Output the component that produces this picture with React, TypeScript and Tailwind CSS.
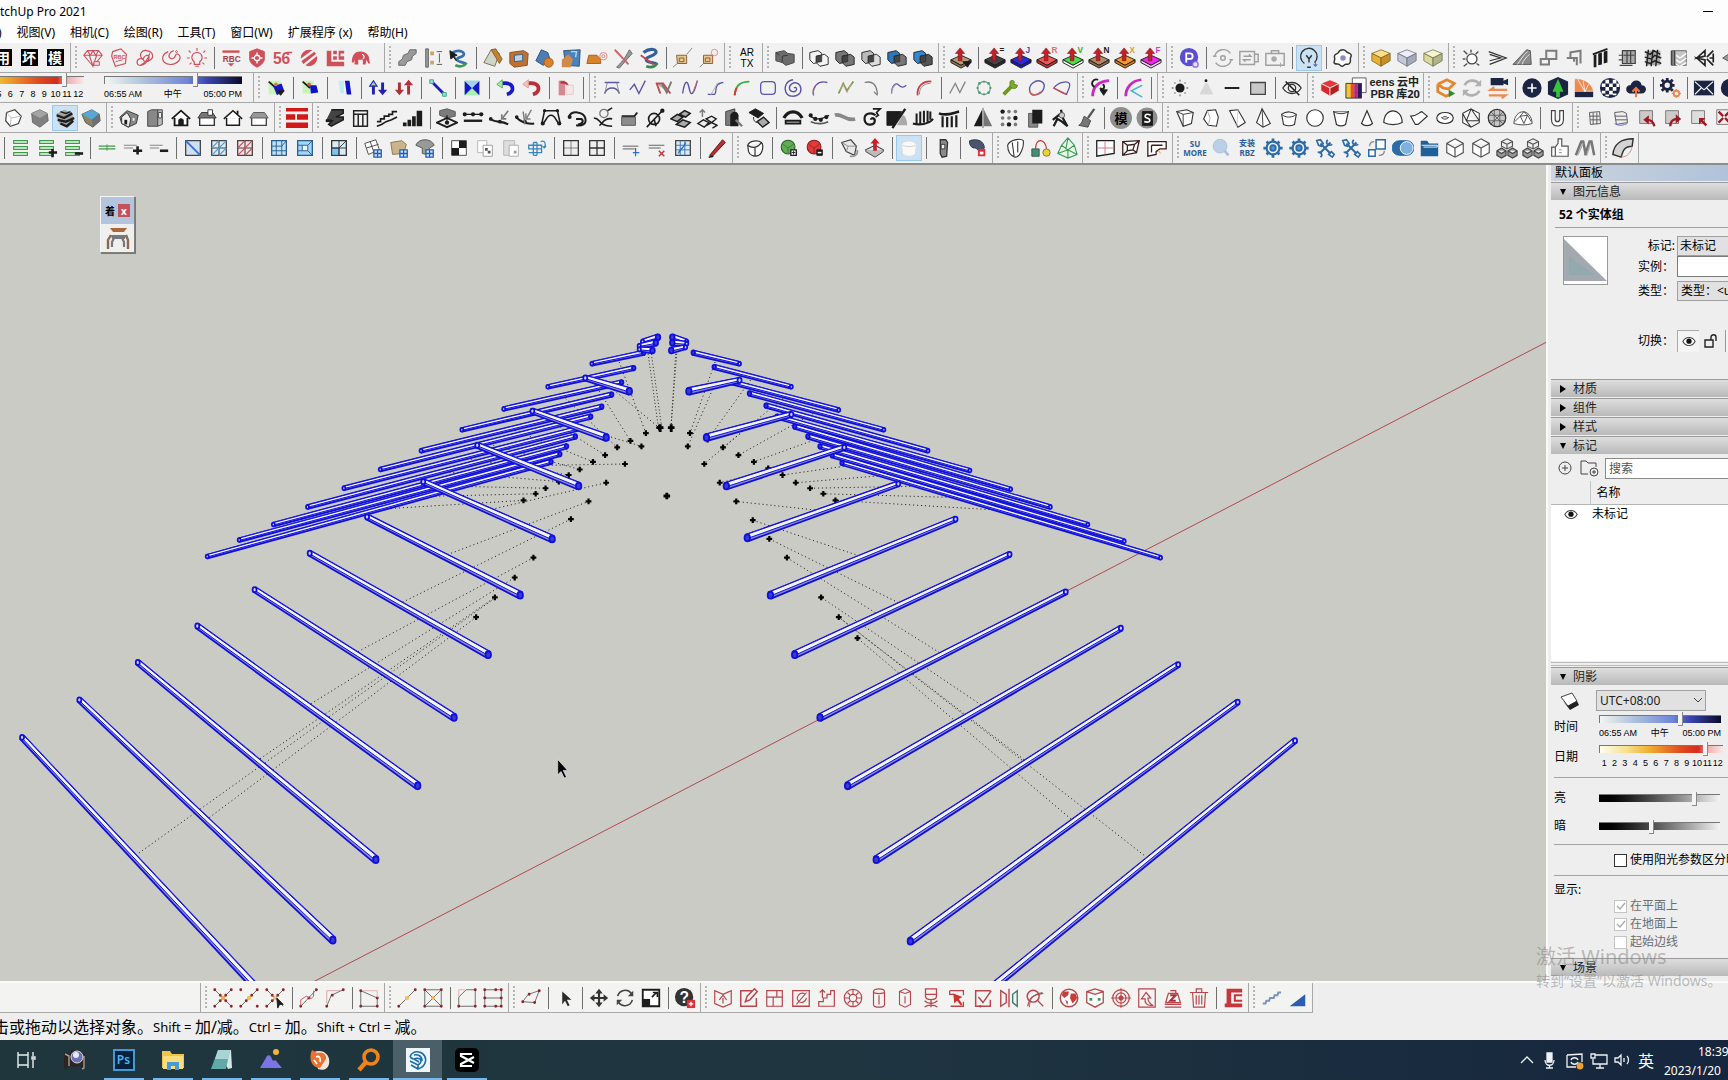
import { useState } from 'react';

// ---------- drawing helpers for the 24x24 tool icons ----------

type Shape = [d: string, stroke: string, fill?: string, width?: number];
type Letter = { text: string; x: number; y: number; fill: string; size: number };
type Part = Shape | Letter;

const K = '#1c1c1c';
const G = '#7c7c7c';
const LG = '#b5b5b5';
const R = '#d0505a';
const B = '#2d6aa8';
const V = '#5a54a8';
const O = '#d9822b';
const RED = '#b8464c';

const c = (x: number, y: number, r: number) =>
  `M${x - r} ${y}a${r} ${r} 0 1 0 ${2 * r} 0a${r} ${r} 0 1 0 ${-2 * r} 0z`;
const b = (x: number, y: number, w: number, h: number) => `M${x} ${y}h${w}v${h}h${-w}z`;
const tx = (text: string, x: number, y: number, fill: string, size: number): Letter => ({ text, x, y, fill, size });

const push = (color: string, side: string, letter: string, ink: string): Part[] => [
  ['M1 14l11-5 11 5-11 6z', K, color],
  ['M1 14v3l11 6 11-6v-3l-11 6z', K, side],
  ['M11 1l5 6h-3v8h-4V7H6z', '#7a1010', '#c4202a', 0.6],
  tx(letter, 17, 7, ink, 9),
];
const cube = (top: string, left: string, right: string, line: string): Part[] => [
  ['M12 3l10 4-10 5L2 7z', line, top, 0.8],
  ['M2 7v8l10 6v-9z', line, left, 0.8],
  ['M22 7v8l-10 6v-9z', line, right, 0.8],
];
const grid = (line: string, fill: string): Part[] => [
  [b(4, 4, 16, 16), '#444', fill, 1.4],
  ['M12 4v16M4 12h16', '#444', '', 1.2],
  ['M4 12l8-8M12 12l8-8M4 20l8-8M12 20l8-8', line, '', 1.2],
];
const lines = (extra: Part[]): Part[] => [
  ['M4 4h15v3H4zM4 10.5h15v3H4zM4 17h15v3H4z', '#3f9a48', '#eef8ee', 1.2],
  ...extra,
];
const solid = (a: string, d: string, line = '#222'): Part[] => [
  ['M2 6l9-2 4 3v9l-9 2-4-4z', line, a, 1],
  ['M9 10l9-2 4 3v8l-9 2-4-4z', line, d, 1],
  ['M9 10l6-1v7l-6 1z', line, '#444', 0.6],
];
const dots = (d: string, pts: number[][]): Part[] => [
  [d, '#666', '', 1],
  ...pts.map(([x, y]): Part => [c(x, y, 1.6), '', '#8c2530']),
];

const ICONS: Record<string, Part[]> = {
  // plug-in set with red outlines
  gem: [['M6 4h12l4 5-10 12L2 9zM2 9h20M8 9l4 12 4-12M6 4l3 5 3-5 3 5 3-5', R, '', 1.2], ['M13 16h6v4h-6z', R, '#f6d5d7', 1]],
  tag: [['M5 5l9-3 6 6-1 10-11 3-4-11z', R, '', 1.3], tx('RBC', 6, 13, R, 6), ['M8 16l8-2', R]],
  swirl: [['M4 19c-2-4 1-7 5-6C4 7 10 3 14 4c7 1 8 7 4 10-5 4-10 1-7-3s8-1 4 4-8 6-11 4M7 20c6-3 9-8 10-13', R, '', 1.3]],
  moon: [['M9 5C3 7 1 13 5 17c5 4 15 2 17-5 0-4-4-6-5-3s-3 5-6 3 0-7 4-8', R, '', 1.3], [c(18, 5, 1), R]],
  bulb: [['M9 16c-5-4-2-10 3-10s8 6 3 10v3H9zM10 21h4M12 1v3M3 4l2 2M21 4l-2 2M1 12h3M20 12h3M4 19l2-2M20 19l-2-2', R, '', 1.3]],
  rbc: [['M3 4h18v2H3zM9 18h6l-3 3z', R, R, 0.6], tx('RBC', 3, 16, '#a04048', 9)],
  shield: [['M12 2l8 3v8c0 4-4 7-8 9-4-2-8-5-8-9V5z', R, R], ['M12 6v3M9 12a3 3 0 1 0 6 0 3 3 0 1 0-6 0M12 15v3M6 12h3M15 12h3', '#fff', '', 1.4]],
  n56: [tx('56', 1, 19, R, 17), ['M16 6h6', R, '', 1.6]],
  ball: [[c(12, 12, 9), '', R], ['M2 15L17 4M6 20L21 8', '#f0f0f0', '', 2.6]],
  ell: [['M3 4h5v12h14v5H3z', '', R], ['M10 4h4v4h-4zM10 10h4v4h-4zM16 4h6v3h-4v3h4v4h-6z', '', R]],
  elephant: [['M2 17c0-9 4-12 9-12 7 0 10 4 10 9l1 4h-2l-2-4-1 5h-3v-5H9v5H5v-5l-1 3z', '', R], ['M13 8c3 1 3 4 1 5', '#fff', '', 1.2]],
  // path tools
  stair: [['M3 20v-4l4-3 1-4 5-2 2-4h7v4l-4 3-1 4-5 2-2 4z', '#666', '#9a9a9a']],
  bracket: [['M4 2v20h3V2z', '#666', '#999'], ['M9 5h4v4H9zM9 15h4v4H9z', '', '#c9a56a'], ['M19 7v10M16 5h6M16 19h6', '#555']],
  pathcursor: [['M5 6c8-4 14 0 12 3s-8 2-7 5 8 2 10 5', '#3a6fb0', '', 3], ['M8 20c5 2 10 1 12-3', '#3c9a4a', '', 3], ['M2 4l8 5-3 1 2 5-3-4-3 2z', K, K]],
  wedge: [['M2 17L10 3l9 4-5 14z', '#7c6a50', '#cfd6c8'], ['M10 3l5-1 7 11-3 5z', '#8a5a20', '#bd8433']],
  frame: [['M2 6l15-2 5 3-1 13-14 2-5-4z', '#8a4d1c', '#c07030'], ['M7 9l9-1v7l-9 1z', '#2e5c8a', '#b8d4ea']],
  blob: [['M2 15L8 3l7 3 3 9-8 5z', '#2d4f78', '#4a7eb5'], [c(16, 17, 5), '#a35d18', O]],
  cutbox: [['M4 4l18-1-1 18-15-1z', '#2d4f78', '#4a82bd'], ['M2 14l7-6 5 5-2 9H2z', '', '#cf8b4c'], ['M12 5l6 0-1 6', '#b8d4ea', '', 1.5]],
  boxtarget: [['M1 18l2-9h9l4 5v4z', '#a35d18', O], [c(19, 10, 4), '#e08080'], [c(19, 10, 1.6), '#e08080']],
  cross: [['M5 22c8-8 9-10 14-19l3 4L8 23z', '#666', '#999'], ['M3 3l15 16', '#d06070', '', 2]],
  pathS: [['M6 6c8-6 16-3 13 1S8 10 9 14s9 2 12 5', '#335f9a', '', 3.4], ['M3 9l14 10', '#c2464e', '', 2], ['M9 21c5 2 9 1 12-3', '#3c8a4a', '', 3]],
  loopA: [['M5 9h11v9H6zM8 12h5v4H8z', '#8a5a20', '#e6c79a'], ['M1 22l6-5M16 8l6-7', G]],
  loopB: [['M6 9h10v9H6zM8 12h5v4H8z', '#8a5a20', '#e6c79a'], [c(18, 6, 3.5), '#d88'], ['M2 22l5-5', G]],
  // solid tools
  solid: [['M2 6l9-2 4 3 7 1v9l-9 3-4-3-7-2z', '#444', '#6c6c6c'], ['M9 10l6-1M9 10v7M2 6l4 3', '#333']],
  s1: solid('#f4f4f4', '#f4f4f4'),
  s2: solid('#777', '#777'),
  s4: solid('#bbb', '#ddd'),
  s5: solid('#2f78b8', '#777'),
  s6: solid('#2f88d0', '#555'),
  // push-pull family
  pushT: [...push('#b59a76', '#8c7150', '', K), ['M14 16h9l-4 6z', K, K]],
  pushK: push('#444', '#2a2a2a', '=', K),
  pushB: push('#2a2af0', '#1a1ab0', 'J', '#4a4ac8'),
  pushR: push('#ef5a5a', '#c23030', 'R', '#e07070'),
  pushG: push('#46e046', '#f0fff0', 'V', '#2fb02f'),
  pushN: push('#b08a68', '#8a6848', 'N', K),
  pushO: push('#f59a30', '#d07818', 'X', '#e8953a'),
  pushM: push('#ef2af0', '#f8c0f8', 'F', '#d040d0'),
  pbadge: [[c(12, 11, 10), '', '#5a4fd0'], ['M9 17V7h4a3 3 0 0 1 0 6H9', '#fff', '', 2], [c(19, 19, 3), '#8a6ae0', '#e9e4fb', 1.4]],
  orbit: [['M3 10a9.5 9.5 0 0 1 17-3M21 14a9.5 9.5 0 0 1-17 3M1 10h4M19 14h4', '#a0a0a0', '', 1.6], [c(12, 12, 2.5), '#a0a0a0', '', 1.6]],
  swap: [['M2 5h16v14H2zM18 8h4v8h-4zM6 10h8l-2-2M14 14H6l2 2', '#a0a0a0', '', 1.6]],
  camcase: [['M2 7h20v13H2zM8 7V4h8v3', '#a0a0a0', '', 1.6], [c(11, 13, 3), '', '#aaa'], ['M18 17v5M16 20h5', '#aaa']],
  yball: [['M7 18a9 9 0 1 1 11-1', '#333', '', 1.5], ['M10 22h4M9 9l3 4 3-4M12 13v4', '#333', '', 1.6], ['M19 16v5M17 19l2 2 2-2', '#5a6ab8', '', 1.3]],
  flower: [['M12 3c3 0 3 2 5 3s4 1 4 3-1 2-1 4 1 3-1 5-4 0-5 1-1 2-3 2-2-1-3-2-3 0-5-1 0-3 0-5-1-2 0-4 3-1 4-3 2-3 5-3z', '#333', '#fdfdfd', 1.6], [c(12, 12, 3), '', '#8a8ac8']],
  cubeY: cube('#fbe08a', '#e8b23a', '#c8902a', '#7a5a18'),
  cubeB: cube('#eceef8', '#c4c8dc', '#a4a8bc', '#6a6a72'),
  cubeG: cube('#f6f4cc', '#d8d8a0', '#b0b488', '#6c6c4c'),
  burst: [[c(13, 13, 5.5), '#444', '#fff', 1.4], ['M4 4l4 4M12 3v3M20 5l-3 3M3 13h3M4 21l4-3M21 20l-3-2', '#555', '', 1.6]],
  fork: [['M3 5l19 7L4 19M4 8l12 4-12 3', '#333', '', 1.4]],
  strat: [['M1 19L16 3l4 1 1 15z', '#555', '#8a8a8a'], ['M6 19c3-4 6-10 11-14M11 19c1-4 5-8 8-11', '#eee']],
  loopsq: [['M9 4h11v9H9zM3 13h9v6H3z', G, '', 2.2]],
  loopsq2: [['M6 6l12-2v14M7 5v7h7v8M3 12h8v4', G, '', 2.2]],
  louver: [['M4 9l3-1v14H4zM9 7l4-1v13l-4 1zM15 5l4-1v13l-4 1z', '', K], ['M3 8l16-6', K, '', 2]],
  panel: [['M7 4h14v14H7zM3 9h4M3 14h4M12 4v14M16 4v14M8 9h12M4 20h14', '#444', '#aaa', 1.3]],
  weave: [['M4 4h16v16H4z', '', '#aaa'], ['M3 5l6 3 4-4 7 4M3 11l7 2 4-4 7 3M3 16l6 2 5-3 7 3M7 3L5 21M12 3l-2 18M17 3l-2 18', '#222', '', 1.6]],
  hatch: [[b(4, 4, 16, 16), '#666', '#c4c4c4'], ['M4 4v16M7 4v16', '#444', '', 2], ['M9 9l4 3 7-5M9 14l4 3 7-5M9 19l4 2 7-4', '#fff', '', 1.5]],
  fan3: [['M3 12l9-8v6zM3 12l9 8v-6zM14 11l7-7M14 13l7 7M17 12h5M21 7v10', '#222', '', 1.8]],
  halfs: [['M3 12l9-6 8 4-8 7z', '#555', '#999']],
  // colour nodes
  col1: [['M4 4h13v15H4z', '', '#c9f5b4'], ['M4 5l8 7', K, '', 2], ['M9 10l9-3 3 8-8 5z', '', '#1717c8'], ['M13 15l8 0-4 5z', K, K], [c(12, 8, 2), '', '#e07a4a']],
  col2: [['M4 4h12v14H4z', '', '#c8f4b8'], ['M4 5l8 7', K, '', 2], ['M12 9l7 0 2 8-8 1z', '', '#1111cc'], [c(11, 8, 2), '', '#e05a3a']],
  col3: [['M6 4h6v14H8z', '', '#bdeef4'], ['M13 4h5l2 15h-5z', '', '#1111cc']],
  updown: [['M7 18V9M3 10l4-6 4 6z', '#2020c0', '#9adf9a', 1.2], ['M7 19V10M17 6v9', '#2020c0', '', 3.2], ['M12 14h10l-5 6z', '', '#2020c0']],
  downup: [['M7 6v9M17 9v10', '#b0303a', '', 3.2], ['M2 14h10l-5 6zM12 9h10l-5-6z', '', '#b0303a']],
  blueline: [['M5 5l13 13', '#1a1ac0', '', 3], [b(3, 3, 4, 4), '#3a8', '#9fe0c8'], [b(17, 17, 4, 4), '#3a8', '#9fe0c8']],
  bowtie: [[b(4, 4, 16, 16), '', '#a9f0b0'], ['M4 4l8 8-8 8zM20 4l-8 8 8 8z', '', '#1515cc'], ['M4 4h16l-8 8z', '', '#9fd0f4']],
  undoB: [['M8 7c6-1 12 1 11 7-1 3-3 4-6 5', '#1a1ac8', '', 4], ['M2 8l6-5v9z', '#5a5', '#a9e8a9']],
  redoR: [['M8 7c6-1 12 1 11 7-1 3-3 4-6 5', '#b8303c', '', 4], ['M2 8l6-5v9z', '#d99', '#f4c0c0']],
  pinkbox: [[b(4, 4, 7, 16), '', '#d08a92'], ['M6 6c6-1 8 2 8 5', '#b8303c', '', 2.5], [b(12, 9, 8, 10), '#e9c7ca', '#f7e6e8']],
  // curve tools
  arc: [['M4 18c3-8 13-8 16 0M4 6h16', V, '', 1.5], ['M7 6L4 18M17 6l3 12', '#888', '', 1]],
  zig: [['M3 14l5-6 5 10 7-14', V, '', 1.5]],
  mark: [['M3 7h8l8 11M4 7l4 11', '#c04a50', '#b5a5a0', 2], ['M10 8l5 9 5-12', '#777', '', 2]],
  nzig: [['M4 18C6 4 9 2 11 12s5 8 9-8', V, '', 1.5], ['M15 17L20 4', '#c66']],
  step: [['M3 19h7c4 0-2-12 10-13', V, '', 1.4], ['M6 20l8-14', '#aaa']],
  garc: [['M4 20C5 10 9 5 20 5', '#3fae4a', '', 2], ['M4 20c0-3 1-5 2-8', '#d33', '', 2]],
  rrect: [['M8 5h8q4 0 4 4v6q0 4-4 4H8q-4 0-4-4V9q0-4 4-4z', V, '', 1.4]],
  spiral: [['M12 12c2-2 4 1 2 3s-7 1-7-3 5-7 9-5 5 9 1 12-12 3-14-3 1-12 8-13', V, '', 1.5]],
  carc: [['M5 20C3 12 9 3 20 6', V, '', 1.5], ['M5 20c-1-3 0-6 2-9', '#c66']],
  polyz: [['M4 18l5-11 4 8 7-10', '#6f9a3a', '', 1.8], ['M4 16l5-8 4 9 5-10', '#c99', '', 1]],
  qarc: [['M4 6c8-2 13 1 14 13M14 16l4 4', G, '', 1.4]],
  rarc: [['M5 18C5 8 10 6 13 9s6 2 8 0', V, '', 1.3], ['M5 18c0-6 2-8 5-10', '#999', '', 1.4]],
  redarc: [['M5 20C4 9 12 4 20 5', '#c8404c', '', 2], ['M7 19c0-8 5-12 12-12', '#888']],
  grayz: [['M3 18l6-11 5 10 6-12', '#888', '', 1.5]],
  ring: [[c(12, 12, 7), '#6a9a8a', '', 1.2], ['M12 4v2M12 18v2M4 12h2M18 12h2M6 6l2 2M18 6l-2 2M6 18l2-2M18 18l-2-2', '#4a9a6a', '', 2]],
  wrench: [['M5 19L14 10', '#6a9a1a', '', 4], ['M12 5c3-3 6 0 4 3l4 1c0 4-5 5-8 1z', '#55801a', '#7fae24']],
  oval: [['M5 15C4 8 12 2 18 5s2 12-4 14-8 0-9-4z', V, '', 1.5], ['M5 15c1 5 8 6 12 1', '#c66', '', 1.5]],
  dshape: [['M3 12C8 5 18 4 20 7s-2 8-3 12C12 18 8 15 3 12z', V, '', 1.4], ['M3 12l14 7', '#d44', '', 1.5]],
  magC: [['M4 21C4 12 9 5 22 4', '#c82ac8', '', 3], ['M10 3c-6-2-9 5-4 8M12 12c4 4 6-2 3-4', K, '', 2], ['M12 14h8l-4 6z', K, K]],
  magY: [['M3 21C3 12 9 4 20 3', '#c828c8', '', 3], ['M21 9L9 15l12 7', '#48b4d8', '', 1.6]],
  dotsun: [['M12 3v2M12 19v2M3 12h2M19 12h2M6 6l1 1M17 17l1 1M18 6l-1 1M7 17l-1 1', '#777', '', 1.5], [c(12, 12, 5), '', K]],
  cone: [[c(12, 4, 1.6), '', K], ['M11 7h3l6 12H5z', '', '#d8d8d8']],
  dash: [['M4 12h16', '#222', '', 2.2]],
  rect: [[b(4, 6, 16, 13), '#444', '#c8c8c8', 1.4]],
  eyeoff: [['M2 12c5-8 15-8 20 0-5 8-15 8-20 0z', '#333', '', 1.4], [c(12, 12, 4), '#333', '', 1.4], ['M5 5l15 15', K, '', 1.6]],
  redcube: cube('#e23a3a', '#d62828', '#b81c1c', '#fff'),
  swatches: [[b(8, 1, 15, 16), '#555', '#fff'], ['M1 7h5v16H1z', '', '#f0c828'], ['M6 7h4v16H6z', '', '#e05818'], ['M10 7h4v16h-4z', '', '#b82878'], ['M14 7h4v16h-4z', '', '#2a1a5a'], [b(1, 7, 17, 16), '#333']],
  eneO: [['M3 8l10-5 8 4-6 6-7-1M3 8v8l9 5 4-2M3 8l6 4', '#e8862e', '', 3], ['M15 14l7 4-7 4z', '', '#2f8a3a']],
  refresh: [['M4 9c3-6 12-7 16-1M20 15c-3 6-12 7-16 1', '#b0b0b0', '', 3], ['M22 3v7h-7zM2 21v-7h7z', '', '#b0b0b0']],
  camarrow: [['M4 1h14v8H4zM18 4l5-2v7l-5-2z', '', '#1c2444'], ['M22 14H4l4-3M2 20h18l-4 3', '#ee8a50', '', 2.6]],
  plusc: [[c(12, 12, 10.5), '', '#1c2444'], ['M12 7v10M7 12h10', '#fff', '', 1.8]],
  tree: [['M12 0l11 5v14l-11 5L1 19V5z', '', '#1c2444'], ['M12 2l6 14h-4v6h-4v-6H6z', '', '#36c43c']],
  fan: [['M2 2c11 0 18 6 20 13H12z', '', '#ee8a50'], ['M2 16h20v6H2z', '', '#1c2444'], ['M2 2v14h11z', '', '#ee8a50'], ['M5 2l8 14M11 4l2 12M17 8l-4 8', '#fff', '', 0.8]],
  checker: [[c(12, 12, 11), '', '#1c2444'], ['M7 3h4v4H7zM15 3h4v4h-4zM3 7h4v4H3zM11 7h4v4h-4zM19 7h3v4h-3zM7 11h4v4H7zM15 11h4v4h-4zM3 15h4v3H3zM11 15h4v4h-4zM7 19h4v2H7zM15 18h4v2h-4z', '', '#fff']],
  cloud: [['M5 18C-1 16 1 8 6 9c2-8 12-6 12 0 7 0 6 9 0 9z', '', '#1c2444'], ['M12 22v-8M8 16l4-4 4 4', '#ee7a40', '', 2.2]],
  gears: [[c(9, 9, 4.5), '#1c2444', '', 3.2], ['M9 1v3M9 14v3M1 9h3M14 9h3M3 3l2 2M15 3l-2 2M3 15l2-2M15 15l-2-2', '#1c2444', '', 3], [c(19, 18, 3), '#ee8a50', '', 2], ['M19 13v2M19 21v2M14 18h2M22 18h2M16 15l1 1M22 15l-1 1M16 21l1-1M22 21l-1-1', '#ee8a50', '', 1.6]],
  mail: [[b(1, 4, 22, 16), '', '#1c2444'], ['M2 5l10 9 10-9M2 19l7-7M22 19l-7-7', '#fff', '', 1.2]],
  circ: [[c(12, 12, 10), '', '#1c2444']],
  // styles
  wire: [['M5 6l9-3 7 7-3 8-9 3-5-6z', '#444', '#fff', 1.3], ['M5 6l5 6-1 9M10 12l11-2', '#bbb']],
  shadeg: [['M4 7l9-4 8 4 1 8-9 7-8-5z', '#666', '#808080'], ['M4 7l9 5 8-5-8-4z', '', '#a4a4a4']],
  stripe: [['M2 8l9-5 8 3 3 8-8 7-8-2z', '', '#a4a4a4'], ['M3 9l8 3 9-5M4 14l9 2 9-4M7 18l7 3 7-6', K, '', 2.6], ['M7 5l6 2 5-2', K, '', 1.6]],
  shadeb: [['M2 8l4 9 8 5 8-7-1-7-8-5z', '#555', '#8c8464'], ['M2 8l11-5 8 4-8 7z', '', '#58a8d4'], ['M13 14l8-7 1 8-8 7z', '', '#6d7078']],
  // views
  house: [['M2 11l8-7 12 5-2 9-9 4-7-4z', '#333', '#888'], ['M4 11l6-5 4 7-2 9-8-4z', '#333', '#eee'], [b(7, 14, 3, 5), '', K], [b(16, 12, 2, 3), '', '#eee']],
  tower: [['M4 5l4-2h7v18H4z', '#444', '#888'], ['M15 3h5v16l-5 2z', '#444', '#bbb'], [b(16, 6, 3, 6), '#444', '#fff']],
  home: [['M5 12v8h14v-8M2 13l10-9 10 9', K, '#fff', 2], ['M9 20v-6l3-2 3 2v6z', '', K]],
  roof: [['M4 11h16v9H4z', '#333', '#fff', 1.5], ['M6 6h12l4 6H2z', '#333', '#777'], [b(13, 3, 5, 6), '#333', '#fff']],
  homeo: [['M5 12v8h14v-8M2 13l10-9 10 9', K, '#fff', 1.6], ['M17 4v4', K, '', 2]],
  roof2: [['M4 11h16v9H4z', '#444', '#fff', 1.5], ['M6 6h12l4 6H2z', '#555', '#999']],
  brick: [['M0 1h24v4H0zM0 8h10v6H0zM12 8h12v6H12zM0 17h24v6H0z', '', '#d31818']],
  zstep: [['M8 3h13v4l-8 4h8v3L8 21l-3-2 4-4H2', K, '#444', 1.6], ['M2 15h6', K, '', 3]],
  table: [['M4 4h15v17H4zM4 8h15M9 8v13M14 8v13', '#222', '', 1.6]],
  slope: [['M1 16h4v-3h4v-3h5V8h4V5h5M1 21l5-2 5-3 6-2 6-3', K, '', 1.8]],
  bars: [['M1 17h4v4H1zM6 14h4v7H6zM11 10h4v11h-4zM16 4h6v17h-6z', '', K]],
  // modelling tools
  k1: [['M4 4l8-2 9 3v5l-9 2-8-3z', '#555', G], ['M12 9v6', K, '', 1.5], ['M1 17l11-5 11 5-11 5z', K, '', 2], [c(12, 17, 2.4), '', K]],
  k2: [['M2 8h20', K, '', 1.4], [c(3, 8, 2.3), '', K], [c(12, 8, 2.3), '', K], [c(21, 8, 2.3), '', K], ['M2 15h20', K, '', 2.6]],
  k3: [['M2 12c4 6 12 2 20 7', K, '', 2.2], [c(3, 13, 2), '', K], [c(13, 16, 2), '', K], ['M22 4l-6 8M15 8v5h5', G, '', 1.8]],
  k4: [['M2 11c5 5 12 8 20 7', K, '', 2.2], [c(3, 11, 2), '', K], [c(12, 16, 2), '', K], ['M19 3l-5 9M13 7v6h5M10 5l2 14', G, '', 1.6]],
  k5: [['M2 18c5 0 4-9 10-9s5 9 10 9M5 4h14M5 4L2 18M19 4l3 14', K, '', 1.7], [c(3, 18, 2.3), '', K], [c(21, 18, 2.3), '', K], [c(5, 4, 1.8), '', K], [c(19, 4, 1.8), '', K]],
  k6: [['M3 11C6 3 19 5 21 12s-4 9-10 8M11 13h6c3 3 0 6-4 6', K, '', 2.2], [c(4, 11, 2.2), '', K]],
  k7: [[c(13, 7, 4.5), '#777', '', 1.4], ['M17 4l5-3M2 12c8 0 4 9 20 9M8 20c3 0 4-9 14-7', K, '', 1.8]],
  k8: [['M4 10h14l3-4', K, '', 2], [b(4, 11, 15, 9), '#555', '#8c8c8c']],
  k9: [[c(11, 13, 6), K, '', 1.8], ['M3 22L21 3M11 13l2 8', K, '', 1.8], [c(20, 4, 2.4), '', K]],
  k10: [['M1 13l7-5 6 3-6 5zM10 8l6-4 6 3-5 4zM7 19l7-5 8 3-6 5z', K, '#aaa', 1.7]],
  k11: [['M2 18l6-4 6 3-5 5zM11 13l6-3 5 3-5 4zM10 21l7-4 6 3-5 3', K, '#eee', 1.5], ['M7 11V3M4 6l3-3 3 3', G, '', 1.6]],
  k12: [['M4 5l10-3v18H4z', '#444', '#7c7c7c'], ['M9 9c2-5 8-5 9 0v12H9z', '', K], ['M15 14l7 7', G, '', 2.6]],
  k13: [['M1 6l7-4 9 5-6 5z', K, K], ['M10 16l7-5 6 6-7 5z', K, '#aaa', 1.6], ['M6 11c0 4 1 5 4 6', K]],
  m1: [['M2 12c5-9 15-9 20 0', K, '', 3.6], ['M4 15h16v3H4z', K, '', 2]],
  m2: [['M1 9c6 5 14 5 22 0', K, '', 1.4], [c(3, 9, 2.3), '', K], [c(8, 13, 2.3), '', K], [c(14, 14, 2.3), '', K], [c(20, 11, 2.3), '', K], ['M3 16c5 2 13 3 19 0', '#555', '', 1.8]],
  m3: [['M1 9c7-3 12 7 22 4', '#888', '', 4]],
  m4: [['M12 14c0-3 5-2 4 2s-10 5-11-2 7-9 12-5', K, '', 2.4], ['M14 2h8l-4 4 2 3-3 2', K, '', 1.8]],
  m5: [['M1 5v15h8l8-15z', K, K], ['M12 20l6-11c3 0 5 5 5 11z', '', '#aaa'], ['M7 23L21 2', K, '', 2.6]],
  m6: [['M1 18c7 2 17 1 22-5M5 7v11M9 5v13M13 4v13M17 4v12M20 5v9', K, '', 2.2]],
  m7: [['M1 7c8 3 14 0 22-2', K, '', 2.8], ['M5 10v12M10 11v11M15 10v12M20 9v13', K, '', 2.4]],
  mirror: [['M11 3v18H2z', '', K], ['M13 3v18h9z', '', '#777'], ['M12 1v22', '#555']],
  ninedot: [[c(5, 5, 2.4), '', K], [c(12, 5, 2), '', G], [c(19, 5, 2), '', G], [c(5, 12, 2), '', G], [c(12, 12, 2), '', G], [c(19, 12, 2.4), '', K], [c(5, 19, 2), '', G], [c(12, 19, 2.4), '', K], [c(19, 19, 2), '', G]],
  copy: [[b(5, 7, 10, 15), '#555', '#888'], [b(9, 3, 11, 15), '', K]],
  compass: [['M12 3l2 9 5 9-6-5-5-3-4 8M3 14l9-7', K, '', 2.4], [c(13, 9, 3), '#555', '#ccc']],
  broom: [['M20 2l-7 10', '#555', '', 2.4], ['M9 10l7 5-3 7-10-2c4-2 4-6 6-10z', '#444', '#777']],
  badgeS: [[c(12, 12, 11.5), '', '#8e8e8e'], [b(7, 5, 11, 15), K, K], ['M16 9c-6-3-8 2-4 3s5 6-3 4', '#fff', '', 1.8]],
  // primitives
  p1: [['M3 5l11-2 7 3-2 12-9 3z', '#333', '#fff', 1.2], ['M3 5l7 3 11-2M10 8v13', '#333', '', 1]],
  p2: [['M8 4l9-1 3 8-2 10-9-1-5-7z', '#333', '#fff', 1.2], ['M8 4l3 8-2 8', '#aaa']],
  p3: [['M4 4l9-1 8 14-8 5z', '#333', '#fff', 1.2], ['M13 3l-1 18', '#ccc']],
  p4: [['M11 2l9 16-8 4-7-5z', '#333', '#fff', 1.2], ['M11 2l1 20', '#333', '', 1]],
  p5: [['M4 8c5-4 12-3 16 0l-2 11c-4 2-8 2-12 0z', '#333', '#fff', 1.2], ['M4 8c4 4 12 4 16 0', '#333', '', 1]],
  p6: [[c(12, 12, 9), '#333', '#fff', 1.3]],
  p7: [['M4 5h16l-3 14c-3 2-7 2-10 0z', '#333', '#fff', 1.3], ['M4 5c4 3 12 3 16 0', '#333', '#ddd', 1]],
  p8: [['M12 4l6 14c-3 3-9 3-12 0z', '#333', '#fff', 1.3]],
  p9: [['M2 17C2 0 22 0 22 17c-5 3-15 3-20 0z', '#333', '#fff', 1.3]],
  p10: [['M3 10c7 0 9-4 12-5l6 5-10 9H8z', '#333', '#fff', 1.3]],
  p11: [['M3 12c0-8 18-8 18 0s-18 8-18 0z', '#333', '#fff', 1.3], ['M8 11c2 3 6 3 8 0M9 12c1-2 5-2 6 0', '#333']],
  p12: [['M12 2l9 5v10l-9 5-9-5V7zM12 2l-5 13h14L12 2M3 7l4 8 5 7 9-5', '#333', '#fff', 1.1]],
  p13: [[c(12, 12, 9.5), '#333', '#c8c8c8', 1.4], ['M3 9h18M3 15h18M9 3v18M15 3v18M5 5l14 14M19 5L5 19', '#555', '', 0.9]],
  p14: [['M2 18C3 1 21 1 22 18c-6 2-14 2-20 0zM3 16l6-6 4 8 4-9 4 7M9 10l4-5 4 4z', '#444', '#fff', 1]],
  magU: [['M6 4h4v9c0 4 5 4 5 0V4h4v10c0 9-13 9-13 0z', '#444', '#fff', 1.3]],
  q1: [['M6 6l11-1 1 13-11 1zM6 10h11M7 14h11M10 6v13M14 6v13', '#555', '#eee', 1]],
  q2: [['M5 6l9-1 4 2 1 10-12 2zM5 10h13M6 14h13', '#555', '#eee', 1], ['M5 18c4 3 10 2 14 0', '#66c']],
  q3: [[b(4, 4, 14, 14), '#777', '#cfcaca'], ['M20 21c-1-5-4-7-8-7', '#a01824', '', 2.6], ['M14 9v10l-6-5z', '', '#a01824']],
  q4: [[b(4, 4, 14, 14), '#777', '#cfcaca'], ['M9 21c0-5 3-8 8-8', '#a01824', '', 2.6], ['M15 8v10l6-5z', '', '#a01824']],
  q5: [[b(4, 4, 14, 14), '#777', '#ddd'], ['M13 13l7 7', '#a01824', '', 2.6], ['M12 12h7l-7 7z', '', '#a01824']],
  q6: [[b(3, 3, 16, 16), '#777', '#eee'], ['M5 5l5 5M17 5l-5 5M5 17l5-5M17 17l-5-5', '#a01824', '', 2.6]],
  // quad tools
  l1: lines([]),
  l2: lines([['M18 13v9M14 17h9', K, '', 2.8]]),
  l3: lines([['M14 18h9', K, '', 2.8]]),
  d1: [['M3 10h18M3 13h18', '#3f9a48', '', 1.2], ['M12 8v7', '#3f9a48']],
  d2: [['M2 9h14M2 12h10', '#888', '', 1.2], ['M17 10v9M12 15h10', K, '', 2.8]],
  d3: [['M2 9h14M2 12h10', '#888', '', 1.2], ['M13 15h9', K, '', 2.8]],
  g1: [[b(4, 4, 16, 16), '#444', '#cfe0f4', 1.4], ['M4 4l16 16', '#3a6fd0', '', 2]],
  g2: grid('#5a9ad0', '#d8ecf8'),
  g3: grid('#c8505c', '#fae0e4'),
  g4: [[b(4, 4, 16, 16), '#2a5c8c', '#bfe2fa', 1.4], ['M4 10h11M4 15h11M9 4v16M15 4v16M15 10l5-6M15 15h5', '#2a5c8c']],
  g5: [[b(4, 4, 16, 16), '#2a5c8c', '#9fd6fa', 1.4], [b(9, 9, 6, 6), '#2a5c8c', '#e8f4fc'], ['M15 9l5-5M15 15l5 5M4 9h5M4 15h5', '#2a5c8c']],
  g6: [[b(4, 4, 16, 16), '#333', '#d8ecf8', 1.4], [b(4, 12, 8, 8), '#333', '#7cc4f4'], ['M12 4v16M4 12h16M12 12l8-8', '#333']],
  h1: [['M3 7l12-4 4 11-12 5zM9 5l4 12M5 12l13-4', '#444', '#fff', 1], [b(13, 14, 8, 8), '#1f5fb8', '#cfe4fa', 1.4], ['M17 14v8M13 18h8', '#1f5fb8', '', 1.4]],
  h2: [['M3 6l12-2 5 4-3 10-12 1z', '#8a7450', '#c9b48c', 1], [b(13, 14, 8, 8), '#1f5fb8', '#cfe4fa', 1.4], ['M17 14v8M13 18h8', '#1f5fb8', '', 1.4]],
  h3: [['M2 9c3-8 17-8 20 0l-5 3-3 7-5-1v-6z', '#555', '#999'], [b(13, 14, 8, 8), '#1f5fb8', '#cfe4fa', 1.4], ['M17 14v8M13 18h8', '#1f5fb8', '', 1.4]],
  uv1: [[b(4, 4, 16, 16), '#444', '#fff'], ['M12 4h8v8h-8zM4 12h8v8H4z', '', K]],
  uv2: [[b(4, 4, 10, 13), LG, '#fff'], [b(10, 9, 10, 12), '#999', '#fff'], [b(12, 12, 3, 3), '', '#555'], [b(15, 15, 3, 3), '', '#555']],
  uv3: [[b(4, 4, 12, 16), LG, '#ddd'], [b(10, 9, 10, 12), '#aaa', '#fff'], [b(15, 15, 3, 3), '', '#999']],
  uv4: [['M3 9h14v4H3zM3 13h14v4H3M8 6v14M12 6v14M8 6h4M8 20h4', '#3b86b8', '', 1.4], ['M16 5c5-2 6 3 4 6M18 10l2 2 2-2', '#3b86b8', '', 1.3]],
  t1: [[b(4, 4, 16, 16), '#333', '#eee', 1.4], ['M4 12h16M12 4v16', '#333', '', 0.6]],
  t2: [[b(4, 4, 16, 16), '#333', '#eee', 1.4], ['M4 12h16M12 4v16', '#333', '', 1.4]],
  t3: [['M3 10h17M3 13h13', '#555'], ['M17 12v9M14 17h7', '#2a6fc0', '', 1.4]],
  t4: [['M3 9h17M3 12h13', '#555'], ['M14 15l6 6M20 15l-6 6', '#c8303c', '', 1.6]],
  t5: [[b(4, 4, 16, 16), '#444', '#d8ecf8', 1.4], ['M4 9h16M4 14h16M9 4v16M14 4v16', '#3a74a8'], ['M7 18c2-6 5-4 8-12', '#2a6fc0', '', 1.5]],
  pen: [['M4 20L18 3l3 3L7 21z', '#5a1010', '#b83030'], ['M3 22l5-1', K, '', 1.6]],
  rcube: [['M4 9c2-5 11-6 15-3 3 3 1 12-3 14-5 2-10 0-11-4zM4 9c5 4 11 3 15-3M12 12v9', '#333', '#fff', 1.3]],
  gball: [[c(11, 11, 7.5), '#2c5c2c', '#5fae54', 1.2], ['M5 8l6 4 6-4M11 12v6', '#3c7c3c'], [b(14, 14, 6, 6), K, '#fff', 1.4], ['M17 15v4M15 17h4', K]],
  rball: [[c(11, 11, 7.5), '#8c1818', '#e03a3a', 1.2], ['M5 8l6 4 6-4M11 12v6', '#a02020'], [b(14, 14, 6, 6), K, K], ['M15 17h4', '#fff', '', 1.6]],
  softbox: [['M4 6l10-3 6 7-2 10-9-4z', '#444', '#e8e8e8', 1.3], ['M4 6l7 4 9 0M11 10l-2 6', '#888'], ['M13 21c5 1 9-2 8-7', '#999', '', 2]],
  redup: [['M2 14l10-5 9 5-9 6z', '#444', '#eee', 1.2], ['M2 14v2l10 6 9-6v-2', '#444', '#bbb', 1], ['M12 1l5 6h-3v8h-4V7H7z', '', '#c8202c']],
  whitecube: [['M4 8c3-5 13-5 16 0l-1 10c-3 4-11 4-14 0z', '#dcdcdc', '#f9f9f9'], ['M5 9c3 2 11 2 14 0', '#ccc']],
  phone: [['M9 3h6l2 3-1 15-5 1-2-4z', '#333', '#8a8a8a', 1.4], [b(10, 8, 4, 5), '#333', '#eee']],
  horn: [['M4 4c9-3 16 1 16 8l-3 3c-5 1-5-4-8-3-3 0-6-4-5-8z', '#333', '#4a5470'], [b(13, 13, 8, 8), '', '#d8303c'], [b(15, 16, 4, 3), '', '#fff']],
  vase: [['M4 9c2-6 14-8 17-5 1 6-3 18-9 18-6-2-8-8-8-13zM9 6l2 15M15 5l0 12', '#333', '#fff', 1.2]],
  link: [[b(2, 13, 8, 8), '#2c5c4c', '#4a8c78'], ['M6 13C6 0 17 2 18 13', '#c33', '', 1.3], [c(18, 17, 4), '#8a7a10', '#e8d040']],
  crystal: [['M2 18l4-9 7-8 7 8 3 10-10 4zM6 9l7 5 7-5M13 14v9M2 18l11-4 10 5M13 1l-2 11', '#3a9a50', '#e6f6e8', 1.2]],
  f1: [['M3 4h19v14l-19 3z', K, '#fff', 1.4], ['M4 12h17M12 5v14', '#d07080', '', 1]],
  f2: [['M3 5l18-1-3 13-15 3zM8 9l8-1-2 6-6 1zM3 5l5 4M21 4l-5 4M18 17l-4-3M3 20l5-5', '#3a1c1c', '#fff', 1.4]],
  f3: [['M2 5h20v8h-7l-4 3v3l-9 2zM6 9h12M6 9v8', '#3a1c1c', '#fff', 1.4], ['M13 14l3 4', '#e09040']],
  lens: [[c(11, 10, 7.5), '#a9bfdc', '#bccfe8'], ['M16 15l4 5', '#a9bfdc', '', 3]],
  gearb: [[c(12, 12, 7), B, '', 2.4], [c(12, 12, 3), B, '#5a94cc', 2], ['M12 1.5v4M12 18.5v4M1.5 12h4M18.5 12h4M5 5l2 2M19 5l-2 2M5 19l2-2M19 19l-2-2', B, '', 3]],
  tools: [['M6 18L18 6M7 7l11 11', B, '', 2.2], ['M15 3c-3 3 0 8 5 5M4 17c4-2 6 3 3 5M3 4l4-1 3 4-2 3-3-1zM16 19l3-3 3 3-2 3z', B, '', 1.8]],
  transf: [[b(11, 3, 10, 10), B, '#fff', 1.6], [b(3, 14, 7, 7), B, '#fff', 1.6], ['M4 10c0-4 2-5 5-5M20 15c0 4-3 5-6 5', '#888', '', 1.4]],
  toggle: [['M8 4h8a8 8 0 0 1 0 16H8A8 8 0 0 1 8 4z', B, B], [c(16, 12, 7), '#fff', '#7fb0e0', 1]],
  folder: [['M3 4h7l2 3h10v14H3z', '', '#1f5f98'], ['M4 9h17v2H6', '#fff', '', 1]],
  cubeo: [['M12 2l9 5v10l-9 5-9-5V7zM3 7l9 5 9-5M12 12v10', '#555', '#fff', 1.3]],
  cubes: [['M12 2l6 3v5l-6 3-6-3V5zM6 5l6 3 6-3M12 8v5', '#555', '#eee', 1.3], ['M6 12l5 3v5l-5 3-5-3v-5zM18 12l5 3v5l-5 3-5-3v-5zM1 15l5 3 5-3M13 15l5 3 5-3', '#444', '#999', 1.3]],
  thumb: [['M4 11h4l3-4V2h4v8h7v11H4zM8 11v10', '#555', '#fff', 1.3], ['M12 14h3M12 17h3', '#888']],
  mm: [['M2 20L8 5h2l3 15M12 20L17 5h2l3 15', '#777', '', 2.8], ['M4 20L10 7M14 20l4-13', '#aaa', '', 1.2]],
  sector: [['M1 19C2 8 10 2 23 2l-1 8c-8 0-10 4-12 12z', '#333', '#d4d4d4', 1.6], ['M10 22c7 0 11-6 12-12', '#d88']],
  // bottom drawing tools
  x1: dots('M3 3l18 18M21 3L3 21', [[3, 3], [21, 3], [3, 21], [21, 21], [9, 9], [15, 15], [9, 15], [15, 9]]).concat([[c(12, 12, 2.4), '', '#f0b040']]),
  x2: dots('M3 21L21 3', [[3, 3], [21, 3], [3, 21], [21, 21], [9, 15], [15, 9]]).concat([[c(12, 12, 2.4), '', '#f0c060']]),
  x3: dots('M3 3l18 18M21 3L3 21', [[3, 3], [21, 3], [3, 21], [9, 9], [9, 15], [15, 9]]).concat([[c(12, 12, 2.2), '', '#f0c060'], ['M14 12l7 7h-4l-2 4z', K, K]]),
  x4: dots('M3 21L20 3', [[3, 21], [20, 3], [12, 12]]).concat([['M3 20v-6l6-4 5 3 3-3v-6', R]]),
  x5: dots('M3 21l5-12 13-6', [[3, 21], [9, 9], [21, 3]]).concat([['M3 18V4h15', '#dba0a0']]),
  x6: dots('M3 4v17h18v-9L3 4', [[3, 4], [3, 21], [21, 21], [21, 12]]).concat([['M5 4h16v7', '#e0b0b0']]),
  y1: dots('M3 21L21 3', [[3, 21], [21, 3]]).concat([[c(12, 12, 2.4), '', '#f4c070']]),
  y2: dots('M3 3h18v18H3zM3 3l18 18M21 3L3 21', [[3, 3], [21, 3], [3, 21], [21, 21]]).concat([[c(12, 12, 2), '', '#f4b040']]),
  y3: dots('M3 11l8-8h10v18H3z', [[3, 21], [21, 21], [21, 3]]).concat([['M3 10V3h7', '#e0b0b0']]),
  y4: dots('M3 3v18M21 3v18M3 3h18M3 12h18M3 21h18', [[3, 3], [21, 3], [3, 12], [21, 12], [3, 21], [21, 21], [15, 3], [15, 21]]),
  z1: dots('M3 16l6-8 12-4-5 13-13-1z', [[3, 16], [10, 8], [21, 4], [16, 17]]),
  arrow: [['M9 5v14l3-4 3 6 2-1-3-6h5z', '', '#2a2a2a']],
  move: [['M12 4v16M4 12h16', '#333', '', 2.4], ['M12 2l4 5H8zM12 22l4-5H8zM2 12l5-4v8zM22 12l-5-4v8z', '', '#333']],
  rotate: [['M4 10a8.5 8.5 0 0 1 15-3M20 14a8.5 8.5 0 0 1-15 3', '#444', '', 1.8], ['M21 4v6h-6zM3 20v-6h6z', '', '#444']],
  scale: [[b(3, 3, 18, 18), K, '#fff', 2], [b(3, 13, 8, 8), '', K], ['M13 11l5-5M14 6h5v5', K, '', 1.8]],
  help: [[c(11, 11, 10), '', '#333'], tx('?', 6, 17, '#fff', 17), [b(14, 14, 9, 9), '', '#d8303c'], ['M18.5 16v5M16 18.5h5', '#fff', '', 1.4]],
  r1: [['M12 8l9-4v14l-9 4-9-4V4z', RED, '', 1.3], ['M12 18v-6M8 14l4-5 4 5', RED, '', 1.3]],
  r2: [['M20 12v9H3V4h12M8 16l2-6 8-8 3 3-8 9z', RED, '', 1.6]],
  r3: [['M3 4h17v17H3zM3 11h17M10 11v10M14 4v7', RED, '', 1.3]],
  r4: [[b(3, 4, 18, 17), RED, '', 1.4], ['M17 8c-6-4-11 3-8 7s8 1 9-3M7 19L18 6', RED, '', 1.2]],
  r5: [['M7 12V3M4 6l3-3 3 3M3 21v-5h5v-4h4V8h4V4h4v17z', RED, '', 1.3]],
  r6: [[c(12, 12, 9.5), RED, '', 1.3], [c(12, 12, 4), RED, '', 1.2], ['M12 3v5M12 16v5M3 12h5M16 12h5M6 6l3 3M18 6l-3 3M6 18l3-3M18 18l-3-3', RED, '', 1.2]],
  r7: [['M6 5c0-4 12-4 12 0v14c0 4-12 4-12 0zM6 5c0 3 12 3 12 0M12 9v10', RED, '', 1.3]],
  r8: [['M6 5l6-3 6 3v14l-6 3-6-3zM6 5l6 2 6-2M12 10v8', RED, '', 1.2]],
  r9: [['M6 2h12v8c0 5-12 5-12 0zM6 8h12M12 14v8M5 15c4 4 10 4 14 0M5 22c3-3 11-3 14 0', RED, '', 1.4]],
  r10: [['M4 4h15v5M5 21h14v-5M4 4v4h5', RED, '', 1.4], ['M8 7l10 4-4 2 4 6-2 1-4-5-3 3z', '', '#d0342c']],
  r11: [['M20 14v7H4V4h16M7 11l5 6 9-13', RED, '', 1.6], [c(9, 21, 1.4), '', RED]],
  r12: [['M3 4l6 4v9l-6 4zM12 2v20', RED, '', 1.5], ['M21 4l-5 4v9l5 4z', '#3c7c6c', '', 1.5]],
  r13: [[c(10, 10, 6.5), RED, '', 1.6], ['M15 15l6 6M4 21C6 12 8 9 21 7', RED, '', 1.3], ['M6 22c0-8 3-14 14-16', '#666', '', 1]],
  globe: [[c(12, 12, 9.5), RED, '#fff', 1.6], ['M6 5l6 0-1 4-4 3-3-3zM14 7l5 0 2 5-5 6-3-6zM8 14l3 2-1 4z', '', '#c83c3c']],
  dice: [['M3 5l9-3 9 3v12l-9 5-9-5zM3 5l9 3 9-3', RED, '#fff', 1.4], [b(6, 12, 3, 3), '', '#3a9a50'], [b(15, 12, 3, 3), '', '#3a9a50']],
  target: [[c(12, 12, 9), RED, '', 1.4], [c(12, 12, 5.5), RED, '', 1.3], [c(12, 12, 2.4), RED, RED], ['M12 1v22M1 12h22', RED]],
  upl: [[b(3, 2, 18, 20), RED, '', 1.3], ['M6 13l5-7 5 6h-3c0 4 2 6 5 8-6 1-9-3-8-7z', RED, '', 1.3]],
  zbox: [['M7 7h10l3 10H4zM9 4h6v3M3 19h18M3 22h18', RED, '', 1.4], ['M9 9h6l-6 6h6', '#a83038', '', 2.2]],
  trash: [['M2 6h20M9 6V2h6v4M5 6l1 16h12l1-16M9 9v10M12 9v10M15 9v10', RED, '', 1.3]],
  cc: [['M5 2h17v4H10v12h12v4H3v-4h2z', '', '#c8363c'], ['M22 9h-8v6h8', '#c8363c', '', 2.2]],
  blueZ: [['M3 18h3l1-3h3l1-3h4l1-3h3l1-3h3', '#7a94b8', '', 2.2]],
  blueT: [['M4 21L21 8v13z', '', '#2a5fb0']],
};

// buttons that carry characters instead of a drawing
const LABELS: Record<string, { lines: string[]; style: string }> = {
  tian: { lines: ['用'], style: 'size-[17px] bg-black text-white text-[14px] leading-[17px] font-bold' },
  huai: { lines: ['坏'], style: 'size-[17px] bg-black text-white text-[14px] leading-[17px] font-bold' },
  mo: { lines: ['模'], style: 'size-[17px] bg-black text-white text-[14px] leading-[17px] font-bold' },
  artx: { lines: ['AR', 'TX'], style: "font-[family-name:'Liberation_Sans',sans-serif] text-[10px] leading-[11px] text-black" },
  pbr: { lines: ['eens', 'PBR'], style: "font-[family-name:'Liberation_Sans',sans-serif] text-[11px] leading-[12px] font-bold text-[#222]" },
  yun: { lines: ['云中', '库20'], style: 'text-[11px] leading-[12px] font-bold text-[#222]' },
  badgeM: { lines: ['模'], style: 'size-[22px] rounded-full bg-[#8e8e8e] text-[13px] leading-[22px] font-bold text-black' },
  su: { lines: ['SU', 'MORE'], style: 'text-[8px] leading-[9px] font-bold text-[#2f5f98]' },
  rbz: { lines: ['安装', 'RBZ'], style: 'text-[8px] leading-[10px] font-bold text-[#2f5f98]' },
};

// "|" is a separator, "_" an empty gap, "*" marks the active tool
const ROW_1 = [
  'tian huai mo',
  'gem tag swirl moon bulb | rbc shield n56 ball ell elephant _',
  'stair bracket pathcursor | wedge frame blob cutbox boxtarget cross pathS | loopA loopB',
  'artx',
  'solid | s1 s2 s4 s5 s6',
  'pushT | pushK pushB pushR pushG pushN pushO pushM',
  'pbadge | orbit swap camcase | *yball | flower',
  'cubeY cubeB cubeG',
  'burst fork strat loopsq loopsq2 louver panel weave hatch fan3 halfs',
];
const ROW_2 = [
  'col1 | col2 | col3 | updown downup | blueline | bowtie | undoB redoR | pinkbox |',
  'arc zig mark nzig step garc rrect spiral carc polyz qarc rarc redarc | grayz ring wrench oval dshape',
  'magC | magY |',
  'dotsun cone dash rect | eyeoff',
  'redcube swatches pbr yun',
  'eneO refresh camarrow | plusc tree fan checker cloud | gears | mail circ',
];
const ROW_3 = [
  'wire shadeg *stripe shadeb',
  'house tower home roof homeo roof2',
  'brick',
  'zstep table slope bars | k1 k2 k3 k4 k5 k6 k7 k8 k9 k10 k11 k12 k13 | m1 m2 m3 m4 m5 m6 m7 | mirror ninedot copy compass broom | badgeM badgeS',
  'p1 p2 p3 p4 p5 p6 p7 p8 p9 p10 p11 p12 p13 p14 | magU',
  'q1 q2 q3 q4 q5 q6',
];
const ROW_4 = [
  '| l1 l2 l3 | d1 d2 d3 | g1 g2 g3 | g4 g5 | g6 | h1 h2 h3 | uv1 uv2 uv3 uv4 | t1 t2 | t3 t4 t5 | pen',
  'rcube | gball rball | softbox redup | *whitecube | phone | horn',
  'vase link crystal',
  'f1 f2 f3',
  'su lens rbz gearb gearb tools tools transf toggle folder cubeo cubeo cubes cubes thumb mm',
  'sector',
];
const ROW_BOTTOM = [
  'x1 x2 x3 | x4 x5 | x6',
  'y1 y2 | y3 y4',
  'z1 | arrow | move rotate scale | help',
  'r1 r2 r3 r4 r5 r6 r7 r8 r9 r10 r11 r12 r13 | globe dice target upl zbox trash | cc',
  'blueZ blueT',
];

function Icon({ name, className = 'size-[22px]' }: { name: string; className?: string }) {
  return (
    <svg viewBox="0 0 24 24" className={className} aria-hidden="true">
      {ICONS[name].map((part, i) =>
        Array.isArray(part) ? (
          <path key={i} d={part[0]} stroke={part[1] || 'none'} fill={part[2] || 'none'} strokeWidth={part[3] ?? 1} />
        ) : (
          <text key={i} x={part.x} y={part.y} fill={part.fill} fontSize={part.size} fontWeight="bold" fontFamily="Liberation Sans, sans-serif">
            {part.text}
          </text>
        ),
      )}
    </svg>
  );
}

function Tool({ token }: { token: string }) {
  if (token === '|') {
    return (
      <span className="flex w-2 shrink-0 justify-center">
        <span className="h-[22px] w-px bg-[#6f6f6f]" />
      </span>
    );
  }
  if (token === '_') return <span className="w-2 shrink-0" />;
  const active = token.startsWith('*');
  const name = active ? token.slice(1) : token;
  const label = LABELS[name];
  return (
    <button
      aria-label={name}
      className={`flex h-[26px] w-[26px] shrink-0 items-center justify-center ${
        active ? 'border border-[#9cc8ec] bg-[#cbe2f5]' : 'hover:bg-[#dcebf7]'
      }`}
    >
      {label ? (
        <span className={`block text-center whitespace-nowrap ${label.style}`}>
          {label.lines.map((line) => (
            <span key={line} className="block">{line}</span>
          ))}
        </span>
      ) : (
        <Icon name={name} />
      )}
    </button>
  );
}

function Handle() {
  return <span className="mr-[3px] ml-1 h-[24px] w-[2px] shrink-0 bg-[repeating-linear-gradient(to_bottom,#b4b4b4_0,#b4b4b4_2px,transparent_2px,transparent_4px)]" />;
}

function Group({ tools, handle = true }: { tools: string; handle?: boolean }) {
  return (
    <div className="flex h-full shrink-0 items-center border-r border-[#a8a8a8] pr-[2px]">
      {handle && <Handle />}
      {tools.split(' ').map((token, i) => (
        <Tool key={i} token={token} />
      ))}
    </div>
  );
}

// ---------- sliders shared by the toolbar and the shadow panel ----------

const THUMB =
  'appearance-none [&::-webkit-slider-thumb]:appearance-none [&::-webkit-slider-thumb]:h-[14px] [&::-webkit-slider-thumb]:w-[5px] [&::-webkit-slider-thumb]:bg-[#f4f4f4] [&::-webkit-slider-thumb]:border-r [&::-webkit-slider-thumb]:border-b [&::-webkit-slider-thumb]:border-[#888]';

function DateSlider({ id }: { id: string }) {
  return (
    <div className="flex flex-col gap-1">
      <input
        id={id}
        aria-label="日期"
        type="range"
        defaultValue={87}
        className={`block h-2 w-full border-t border-l border-[#777] bg-[linear-gradient(to_right,#fdfdf0,#f5e08a_22%,#f0b030_40%,#e04a1c_66%,#d62a1c_80%,#f0b0b0_88%,#fae8e8)] ${THUMB}`}
      />
      <div className="flex font-[family-name:'Liberation_Sans',sans-serif] text-[9px] leading-[12px] text-black">
        {Array.from({ length: 12 }, (_, i) => (
          <span key={i} className="flex w-0 flex-1 justify-center">{i + 1}</span>
        ))}
      </div>
    </div>
  );
}

function TimeSlider({ id }: { id: string }) {
  return (
    <div className="flex flex-col gap-1">
      <input
        id={id}
        aria-label="时间"
        type="range"
        defaultValue={67}
        className={`block h-2 w-full border-t border-l border-[#777] bg-[linear-gradient(to_right,#f2f5f2,#b4c8de_25%,#6f86d8_60%,#3a44b0_75%,#0a0a28)] ${THUMB}`}
      />
      <div className="flex justify-between font-[family-name:'Liberation_Sans','Noto_Sans_CJK_SC',sans-serif] text-[9px] leading-[12px] whitespace-nowrap text-black">
        <span>06:55 AM</span>
        <span>中午</span>
        <span>05:00 PM</span>
      </div>
    </div>
  );
}

// ---------- viewport ----------

type Line = [number, number, number, number];

// front rows run from the far end to the near end
const LEFT_FRONT: Line[] = [
  [20, 669, 233, 897], [72, 635, 302, 853], [125, 601, 341, 780], [179, 568, 379, 713],
  [231, 535, 412, 651], [281, 502, 443, 594], [333, 469, 472, 540], [384, 437, 501, 489],
  [433, 404, 525, 441], [483, 373, 550, 397], [531, 343, 571, 355],
];
const RIGHT_FRONT: Line[] = [
  [1175, 672, 899, 897], [1123, 637, 826, 854], [1069, 603, 795, 780], [1017, 570, 769, 713],
  [967, 537, 744, 651], [916, 503, 721, 594], [867, 471, 699, 540], [815, 439, 678, 488],
  [766, 406, 659, 441], [718, 376, 641, 397], [671, 345, 625, 355],
];
const LEFT_BACK: Line[] = [
  [188, 505, 500, 419], [217, 490, 508, 412], [248, 476, 514, 405], [279, 460, 522, 396],
  [312, 443, 528, 388], [345, 426, 536, 378], [382, 409, 546, 369], [419, 390, 555, 358],
  [457, 371, 564, 347], [497, 351, 575, 334], [537, 330, 584, 320],
];
const RIGHT_BACK: Line[] = [
  [1053, 506, 764, 420], [1020, 491, 755, 413], [987, 476, 744, 405], [953, 460, 733, 396],
  [917, 444, 721, 387], [880, 427, 705, 378], [842, 409, 695, 368], [802, 390, 680, 357],
  [761, 372, 665, 347], [718, 351, 648, 333], [671, 330, 629, 320],
];
const TOP: Line[] = [
  [583, 310, 597, 306], [580, 314, 595, 311], [580, 317, 592, 318],
  [623, 310, 610, 306], [623, 312, 610, 311], [622, 315, 609, 318],
];

const LEFT_FRONT_DOTS = [[432, 560], [449, 542], [467, 524], [484, 506], [518, 471], [534, 455], [550, 438], [567, 421], [582, 405], [598, 388]];
const RIGHT_FRONT_DOTS = [[778, 579], [761, 560], [745, 542], [714, 506], [698, 489], [683, 472], [668, 455], [653, 438], [639, 421], [624, 405]];
const LEFT_BACK_DOTS = [[475, 454], [486, 448], [495, 443], [507, 437], [516, 431], [526, 426], [538, 419], [549, 413], [560, 406], [572, 400], [586, 393]];
const RIGHT_BACK_DOTS = [[758, 454], [747, 448], [735, 443], [722, 438], [710, 431], [697, 425], [684, 419], [670, 413], [656, 406], [642, 399], [626, 393]];

function Beam({ line, far, near }: { line: Line; far: number; near: number }) {
  const [x1, y1, x2, y2] = line;
  const len = Math.hypot(x2 - x1, y2 - y1);
  let nx = -(y2 - y1) / len;
  let ny = (x2 - x1) / len;
  // keep the normal pointing up so the lit face stays on top
  if (ny > 0) {
    nx = -nx;
    ny = -ny;
  }
  const at = (x: number, y: number, k: number) => `${x + nx * k},${y + ny * k}`;
  return (
    <g stroke="#0f0fdc" strokeWidth="1.6" strokeLinejoin="round">
      <polygon fill="#8f8fc4" points={[at(x1, y1, far), at(x2, y2, near), at(x2, y2, -near), at(x1, y1, -far)].join(' ')} />
      <polygon fill="#f4f4ff" strokeWidth="0.9" points={[at(x1, y1, far), at(x2, y2, near), at(x2, y2, -near * 0.2), at(x1, y1, -far * 0.2)].join(' ')} />
      <ellipse cx={x2} cy={y2} rx={near * 0.8} ry={near} fill="#3a3ad0" />
      <ellipse cx={x1} cy={y1} rx={far * 0.8} ry={far} fill="#d0d0f8" />
    </g>
  );
}

function Guides({ beams, marks }: { beams: Line[]; marks: number[][] }) {
  return (
    <g>
      {beams.map(([x1, y1, x2, y2], i) => (
        <line
          key={i}
          x1={(x1 + x2) / 2}
          y1={(y1 + y2) / 2}
          x2={marks[i][0]}
          y2={marks[i][1]}
          stroke="#222"
          strokeWidth="0.9"
          strokeDasharray="1 2.6"
        />
      ))}
      {marks.map(([x, y], i) => (
        <path key={i} d={`M${x - 2.6} ${y}h5.2M${x} ${y - 2.6}v5.2`} stroke="#000" strokeWidth="2" />
      ))}
    </g>
  );
}

function Viewport() {
  return (
    <main className="relative min-w-0 flex-1 overflow-hidden bg-[#cacbc5]">
      <svg viewBox="0 149.7 1402.7 740.4" preserveAspectRatio="xMidYMid slice" className="block h-full w-full">
        <line x1="1403" y1="310.5" x2="284" y2="891" stroke="#b0484e" strokeWidth="0.9" />
        <path d="M126 774L450 542M1038 776L761 560" stroke="#222" strokeWidth="0.9" strokeDasharray="1 2.6" />
        <Guides beams={LEFT_FRONT.slice(1)} marks={LEFT_FRONT_DOTS} />
        <Guides beams={RIGHT_FRONT.slice(1)} marks={RIGHT_FRONT_DOTS} />
        <Guides beams={LEFT_BACK} marks={LEFT_BACK_DOTS} />
        <Guides beams={RIGHT_BACK} marks={RIGHT_BACK_DOTS} />
        <path d="M588 321l9 64M591 321l9 64M614 321l-5 64M613 321l-4 64" stroke="#333" strokeWidth="0.9" strokeDasharray="1 2" />
        <path d="M596 388h6M599 385v7M606 388h6M609 385v7M602 450h6M605 447v6" stroke="#000" strokeWidth="2.6" />
        {LEFT_BACK.map((line, i) => <Beam key={i} line={line} far={1.7} near={2} />)}
        {RIGHT_BACK.map((line, i) => <Beam key={i} line={line} far={1.7} near={2} />)}
        {LEFT_FRONT.map((line, i) => <Beam key={i} line={line} far={2.3} near={3.1} />)}
        {RIGHT_FRONT.map((line, i) => <Beam key={i} line={line} far={2.3} near={3.1} />)}
        {TOP.map((line, i) => <Beam key={i} line={line} far={1.9} near={2.6} />)}
        <path d="M506 689v14l3-3 3 6 2-1-3-6h4z" fill="#000" stroke="#eee" strokeWidth="0.6" />
      </svg>

      {/* Floating single-tool palette */}
      <div className="absolute top-[31px] left-[100px] flex w-[35px] flex-col border border-[#f4f4f4] border-r-[#808080] border-b-[#808080] bg-[#efefef] shadow-[1px_1px_0_#777]">
        <div className="flex h-[27px] items-center justify-between bg-[#b3c4dc] pr-1 pl-1">
          <span className="w-2.5 overflow-hidden text-[10px] leading-[14px] font-bold text-black">着</span>
          <button aria-label="关闭" className="flex h-[13px] w-3 items-center justify-center bg-[#c4525c] text-[10px] leading-none font-bold text-white">x</button>
        </div>
        <button aria-label="stool" className="flex h-[28px] items-center justify-center">
          <svg viewBox="0 0 24 24" className="size-[24px]" aria-hidden="true">
            <path d="M4 2h17l-3 4H7z" fill="#a8683a" />
            <path d="M5 9h15l-1 4H6z" fill="#777" />
            <path d="M5 9L2 14v9M20 9l2 5v9" fill="none" stroke="#8a6a4c" strokeWidth="2.4" />
            <path d="M8 12l-2 4v5M16 12l2 4v5" fill="none" stroke="#77777a" strokeWidth="2.2" />
          </svg>
        </button>
      </div>
    </main>
  );
}

// ---------- right tray ----------

function SectionBar({ title, open = false }: { title: string; open?: boolean }) {
  return (
    <button className="mb-px flex h-[18px] w-full shrink-0 items-center border-t border-[#9a9a9a] bg-linear-to-b from-[#dedede] to-[#b9b9b9] pl-2 text-[12px] leading-none text-[#222]">
      <svg viewBox="0 0 8 8" className="mr-1.5 size-2" aria-hidden="true">
        <path d={open ? 'M1 1h6L4 7z' : 'M1 0v8l6-4z'} fill="#000" />
      </svg>
      {title}
    </button>
  );
}

function EyeIcon() {
  return (
    <svg viewBox="0 0 16 12" className="h-[11px] w-[14px]" aria-hidden="true">
      <path d="M1 6c3-6 11-6 14 0-3 6-11 6-14 0z" fill="#fff" stroke="#444" strokeWidth="1.2" />
      <circle cx="8" cy="5.6" r="3" fill="#111" />
    </svg>
  );
}

function Tray() {
  const [useSun, setUseSun] = useState(false);
  return (
    <aside className="flex w-[182px] shrink-0 flex-col overflow-hidden border-l-2 border-[#fafafa] bg-[#eeeeee] pl-[3px] text-[12px] whitespace-nowrap text-black">
      <h2 className="mb-px flex h-4 shrink-0 items-center bg-linear-to-r from-[#ccd4dc] to-[#b0c2da] pl-1 leading-none">默认面板</h2>

      <SectionBar title="图元信息" open />
      <section className="flex h-[178px] shrink-0 flex-col">
        <h3 className="ml-1 flex h-[27px] shrink-0 items-center border-b border-[#a0a0a0] pt-px pl-1 font-bold">52 个实体组</h3>
        <div className="flex pt-2 pl-3">
          <svg viewBox="0 0 45 49" className="h-[49px] w-[45px] shrink-0 border border-[#999] bg-white" aria-hidden="true">
            <path d="M0 2v44h45z" fill="#a4a9b0" />
            <path d="M5 20v20h28z" fill="#92aaae" />
          </svg>
          <div className="ml-[30px] flex flex-col">
            <div className="flex h-5 items-center">
              <label htmlFor="tag" className="w-[39px] pr-0.5 text-right">标记:</label>
              <select id="tag" className="h-5 w-[120px] appearance-none border border-[#a0a0a0] bg-[#e1e1e1] pl-0.5">
                <option>未标记</option>
              </select>
            </div>
            <div className="mb-1 flex h-[21px] items-center">
              <label htmlFor="instance" className="w-[39px]">实例：</label>
              <input id="instance" className="h-[21px] w-[120px] border border-[#7a7a7a] bg-white" />
            </div>
            <div className="flex h-5 items-center">
              <label htmlFor="kind" className="w-[39px]">类型：</label>
              <select id="kind" className="h-5 w-[120px] appearance-none border border-[#a0a0a0] bg-[#e1e1e1] pl-[3px]">
                <option>类型：&lt;undefined&gt;</option>
              </select>
            </div>
            <div className="mt-7 flex h-6 items-center">
              <span className="w-[39px]">切换：</span>
              <button aria-label="隐藏" className="flex h-[22px] w-[22px] items-center justify-center border-t border-l border-[#aaa] bg-[#f4f4f4]"><EyeIcon /></button>
              <button aria-label="锁定" className="flex h-[22px] w-6 items-center justify-center">
                <svg viewBox="0 0 14 14" className="size-3.5" aria-hidden="true">
                  <path d="M1 6h8v7H1zM7 6V3c0-3 5-3 5 0v4" fill="none" stroke="#222" strokeWidth="1.4" />
                </svg>
              </button>
              <button aria-label="阴影" className="ml-[2px] h-[22px] w-6 border-l border-[#999] bg-[#f4f4f4]" />
            </div>
          </div>
        </div>
      </section>

      <SectionBar title="材质" />
      <SectionBar title="组件" />
      <SectionBar title="样式" />
      <SectionBar title="标记" open />
      <div className="flex h-[26px] shrink-0 items-center pl-[7px]">
        <button aria-label="添加标记">
          <svg viewBox="0 0 14 14" className="size-[14px]" fill="none" stroke="#444" aria-hidden="true">
            <circle cx="7" cy="7" r="6" />
            <path d="M7 4v6M4 7h6" />
          </svg>
        </button>
        <button aria-label="添加标记文件夹" className="mr-[6px] ml-2">
          <svg viewBox="0 0 19 17" className="h-[17px] w-[19px]" fill="none" stroke="#444" aria-hidden="true">
            <path d="M8 14H1V1h5l2 2h8v4" />
            <circle cx="14" cy="12" r="4" />
            <path d="M14 10v4M12 12h4" />
          </svg>
        </button>
        <input aria-label="搜索标记" placeholder="搜索" className="h-[21px] w-[140px] border border-[#8a8a8a] bg-white pl-[3px] placeholder:text-[#555]" />
      </div>
      <table className="w-full shrink-0 border-collapse">
        <thead>
          <tr className="h-[23px] border-b border-[#b5b5b5]">
            <th className="w-[39px] border-r border-[#c4c4c4]" />
            <th className="pt-0.5 pl-1.5 text-left font-normal">名称</th>
          </tr>
        </thead>
        <tbody className="bg-white">
          <tr className="h-[20px]">
            <td><span className="flex justify-center"><EyeIcon /></span></td>
            <td className="pl-0.5">未标记</td>
          </tr>
        </tbody>
      </table>
      <div className="min-h-0 flex-1 bg-white" />
      <div className="my-px h-[4px] shrink-0 border-y border-[#bbb]" />

      <SectionBar title="阴影" open />
      <section className="flex shrink-0 flex-col pl-[3px]">
        <div className="flex h-[25px] items-end">
          <button aria-label="显示阴影" className="mr-4 ml-1.5">
            <svg viewBox="0 0 20 20" className="size-5" aria-hidden="true">
              <path d="M1 6l11-4 5 8-9 5z" fill="#fff" stroke="#444" />
              <path d="M3 10l5 5 9-5 2 4-9 5z" fill="#222" />
            </svg>
          </button>
          <span className="relative flex">
            <select aria-label="时区" className="h-[21px] w-[110px] appearance-none border border-[#a0a0a0] bg-[#e1e1e1] pl-[3px] text-[#222]">
              <option>UTC+08:00</option>
            </select>
            <svg viewBox="0 0 8 5" className="absolute top-2 right-1 h-[5px] w-2" aria-hidden="true">
              <path d="M0 0l4 4 4-4" fill="none" stroke="#444" />
            </svg>
          </span>
        </div>
        <div className="flex h-[31px] items-center">
          <label htmlFor="tray-time" className="w-[45px]">时间</label>
          <div className="w-[122px]"><TimeSlider id="tray-time" /></div>
        </div>
        <div className="flex h-[29px] items-center">
          <label htmlFor="tray-date" className="w-[45px]">日期</label>
          <div className="w-[124px]"><DateSlider id="tray-date" /></div>
        </div>
        <hr className="mt-1.5 mb-1.5 border-[#a4a4a4]" />
        <div className="flex h-7 items-center">
          <label htmlFor="light" className="w-[45px]">亮</label>
          <input id="light" type="range" defaultValue={80} className={`h-2 w-[121px] border-t border-[#777] bg-linear-to-r from-black to-[#f4f4f4] ${THUMB}`} />
        </div>
        <div className="flex h-7 items-center">
          <label htmlFor="dark" className="w-[45px]">暗</label>
          <input id="dark" type="range" defaultValue={43} className={`h-2 w-[121px] border-t border-[#777] bg-linear-to-r from-black to-[#f4f4f4] ${THUMB}`} />
        </div>
        <hr className="mt-1 border-[#a4a4a4]" />
        <label className="flex h-[30px] items-center gap-[3px] pl-[60px]">
          <input
            type="checkbox"
            checked={useSun}
            onChange={(e) => setUseSun(e.target.checked)}
            className="size-[13px] shrink-0 appearance-none border border-[#333] bg-white checked:bg-[#333]"
          />
          使用阳光参数区分明暗面
        </label>
        <hr className="border-[#a4a4a4]" />
        <div className="flex h-[21px] items-center pt-1.5">显示:</div>
        {[['在平面上', true], ['在地面上', true], ['起始边线', false]].map(([text, on]) => (
          <label key={String(text)} className="flex h-[18px] items-center gap-[3px] pl-[60px] text-[#6d6d6d]">
            <span className="relative flex size-[13px] shrink-0">
              <input type="checkbox" disabled defaultChecked={Boolean(on)} className="size-[13px] appearance-none border border-[#c4c4c4] bg-white" />
              {on && (
                <svg viewBox="0 0 13 13" className="absolute inset-0 size-[13px]" aria-hidden="true">
                  <path d="M3 6l3 3 5-6" fill="none" stroke="#aaa" strokeWidth="1.4" />
                </svg>
              )}
            </span>
            {text}
          </label>
        ))}
      </section>
      <div className="h-[7px] shrink-0" />
      <SectionBar title="场景" open />
      <div className="h-1 shrink-0" />
    </aside>
  );
}

// ---------- taskbar ----------

function TaskIcon({ name }: { name: string }) {
  if (name === 'Ps') {
    return <span className="flex size-[22px] items-center justify-center border-2 border-[#3f9ad8] bg-[#06223a] text-[12px] leading-none font-semibold text-[#4ab4f4]">Ps</span>;
  }
  return (
    <svg viewBox="0 0 24 24" className="size-[24px]" fill="none" aria-hidden="true">
      {name === 'view' && <path d="M4 4v3h10V4M4 20v-3h10v3M4 7v10M14 7v10M19 4v4M19 12v8M18 9h3v2h-3z" stroke="#e8eef0" strokeWidth="1.4" />}
      {name === 'camera' && (
        <>
          <path d="M1 5l5 1 2-4h7l4 3 3 1v14l-3 2-2-4-5 1-6-1-3 4-2-3z" fill="#2a2522" />
          <path d="M2 6l4 2v10M21 8v12l-2 1" stroke="#a89c90" strokeWidth="1.4" />
          <circle cx="14" cy="9" r="6" fill="#6a72b0" stroke="#ddd" />
          <circle cx="13" cy="7" r="3" fill="#e8e8ff" />
        </>
      )}
      {name === 'files' && (
        <>
          <path d="M1 3h8l2 3h12v14H1z" fill="#f0c44c" />
          <path d="M2 8h20v13H2z" fill="#fadc7c" />
          <path d="M6 22v-8h12v8h-4v-4h-4v4z" fill="#4a9ad4" />
        </>
      )}
      {name === 'note' && (
        <>
          <path d="M8 2h13l1 18-4 1z" fill="#d4e8e8" />
          <path d="M8 2h12l-4 19H1z" fill="#62a8a8" />
          <path d="M8 2h12l-2 9H5z" fill="#a8d4d4" />
        </>
      )}
      {name === 'hills' && (
        <>
          <path d="M1 20L8 8c1-1 3-1 4 1l2 4c1-1 3-1 4 1l5 6z" fill="#7a74e4" />
          <circle cx="17" cy="4" r="3" fill="#f4b43c" />
        </>
      )}
      {name === 'fox' && (
        <>
          <path d="M6 4c10-4 17 4 15 12-1 5-6 7-11 5z" fill="#f2e4dc" />
          <path d="M4 2l5 3c6-2 10 2 9 6l-6 9C4 20 0 11 4 2z" fill="#e87434" />
          <path d="M8 9c3-2 5 1 4 5M6 12l3 4" stroke="#fff" strokeWidth="1.6" />
        </>
      )}
      {name === 'search' && (
        <>
          <circle cx="14" cy="9" r="7" stroke="#f08418" strokeWidth="3.6" />
          <path d="M9 14l-7 8" stroke="#f08418" strokeWidth="4.4" />
        </>
      )}
      {name === 'sketch' && (
        <>
          <path d="M0 0h24v24H0z" fill="#eef6fb" />
          <path d="M4 9c1-4 5-6 9-5 5 1 8 6 6 11-1 3-4 5-7 6v-4c3-2 4-4 2-6-2-1-4-1-6 0l5 3M4 9l3 2M4 13l8 4M5 17l7 4M8 7c4-1 8 1 8 6" stroke="#1c6ca8" strokeWidth="1.6" />
        </>
      )}
      {name === 'cut' && (
        <>
          <rect width="24" height="24" rx="5" fill="#000" />
          <path d="M17 6H6v2l13 7M17 18H6v-2l13-7" stroke="#fff" strokeWidth="2.2" />
        </>
      )}
    </svg>
  );
}

const TASKS = ['view', 'camera', 'Ps', 'files', 'note', 'hills', 'fox', 'search', 'sketch', 'cut'];

function Taskbar() {
  return (
    <footer className="flex h-10 shrink-0 items-stretch overflow-hidden bg-linear-to-r from-[#20363d] via-[#1f3540] to-[#16263e] pl-px text-white">
      {TASKS.map((name, i) => (
        <button
          key={name}
          aria-label={name}
          className={`flex w-[49px] shrink-0 flex-col items-center justify-between ${name === 'sketch' ? 'bg-[#4b5f68]' : ''}`}
        >
          <span className="flex h-[38px] items-center pt-0.5"><TaskIcon name={name} /></span>
          {i > 1 && <span className={`h-[2px] bg-[#76b9ed] ${name === 'sketch' ? 'w-full' : 'w-10'}`} />}
        </button>
      ))}
      <div className="ml-auto flex shrink-0 items-center">
        <svg viewBox="0 0 116 20" className="mr-0.5 h-5 w-[116px]" fill="none" stroke="#eef2f4" strokeWidth="1.3" aria-hidden="true">
          <path d="M1 13l6-6 6 6" />
          <path d="M27 3h5v9h-5z" fill="#eef2f4" />
          <path d="M25 10c0 7 9 7 9 0M29.500 15v3M26 18h7" />
          <path d="M47 5l15-1v8M47 5v12h9" />
          <path d="M51 10c1-3 6-3 7 0M58 12c-1 3-6 3-7 0" />
          <circle cx="60" cy="16" r="3.4" fill="#f0a030" stroke="none" />
          <path d="M75 5h12v9H73V9M71 4h4v4h-4zM80 14v4M76 18h8" />
          <path d="M95 8v4h3l3 3V5l-3 3zM104 8v4M107 6c2 2 2 6 0 8" />
        </svg>
        <span className="pt-0.5 text-[16px] leading-none">英</span>
        <div className="ml-2.5 flex w-[64px] flex-col overflow-hidden pt-0.5 text-[12px] leading-[19px] whitespace-nowrap">
          <span className="pl-[34px]">18:39</span>
          <span>2023/1/20</span>
        </div>
      </div>
    </footer>
  );
}

const MENUS = ['视图(V)', '相机(C)', '绘图(R)', '工具(T)', '窗口(W)', '扩展程序 (x)', '帮助(H)'];

export default function App() {
  return (
    <div className="relative flex h-screen w-full flex-col overflow-hidden bg-[#eeeeee] font-['Noto_Sans','Noto_Sans_CJK_SC',sans-serif] text-black">
      <header className="shrink-0 bg-[#fdfdfd]">
        <div className="flex h-[23px] items-center justify-between pr-[15px]">
          <h1 className="text-[12px] leading-none">tchUp Pro 2021</h1>
          <button aria-label="最小化" className="h-px w-2.5 bg-black" />
        </div>
        <nav className="flex h-5 items-center gap-[15px] text-[12px] leading-none whitespace-nowrap">
          <button className="-ml-0.5">)</button>
          {MENUS.map((menu) => (
            <button key={menu}>{menu}</button>
          ))}
        </nav>
      </header>

      <div className="shrink-0 overflow-hidden border-b-2 border-[#8c8c8c] bg-[#f1f1f1]">
        <div className="-ml-[10px] flex h-[30px] items-center border-b border-[#a8a8a8]">
          {ROW_1.map((tools, i) => <Group key={tools} tools={tools} handle={i > 0} />)}
        </div>
        <div className="flex h-[30px] items-center border-b border-[#a8a8a8]">
          <div className="flex h-full w-[254px] shrink-0 items-center border-r border-[#a8a8a8]">
            <div className="-ml-[52px] w-[136px] shrink-0"><DateSlider id="bar-date" /></div>
            <div className="ml-5 w-[138px] shrink-0"><TimeSlider id="bar-time" /></div>
          </div>
          {ROW_2.map((tools) => <Group key={tools} tools={tools} />)}
        </div>
        <div className="flex h-[30px] items-center border-b border-[#a8a8a8]">
          {ROW_3.map((tools, i) => <Group key={tools} tools={tools} handle={i > 0} />)}
        </div>
        <div className="flex h-[30px] items-center">
          {ROW_4.map((tools, i) => <Group key={tools} tools={tools} handle={i > 0} />)}
        </div>
      </div>

      <div className="flex min-h-0 flex-1">
        <Viewport />
        <Tray />
      </div>

      <div className="flex h-8 shrink-0 items-center border-t-2 border-[#fafafa]">
        <div className="flex h-full items-center border-b border-[#a8a8a8] bg-[#f3f3f2]">
          <div className="h-full w-[201px] shrink-0 border-r border-[#a8a8a8]" />
          {ROW_BOTTOM.map((tools) => <Group key={tools} tools={tools} />)}
        </div>
      </div>
      <div className="flex h-[27px] shrink-0 items-center pt-px text-[16px] leading-none whitespace-pre">
        <span className="-ml-[7px]">击或拖动以选择对象。</span>
        <span className="text-[13px]">Shift = </span>
        <span>加/减。</span>
        <span className="text-[13px]">Ctrl = </span>
        <span>加。</span>
        <span className="text-[13px]">Shift + Ctrl = </span>
        <span>减。</span>
      </div>

      <Taskbar />

      {/* Activation watermark */}
      <div className="pointer-events-none absolute right-0 bottom-[88px] flex w-[192px] flex-col overflow-hidden whitespace-nowrap text-[#808080]/50">
        <span className="text-[20px] leading-[26px]">激活 Windows</span>
        <span className="text-[14px] leading-[22px]">转到“设置”以激活 Windows。</span>
      </div>
    </div>
  );
}
